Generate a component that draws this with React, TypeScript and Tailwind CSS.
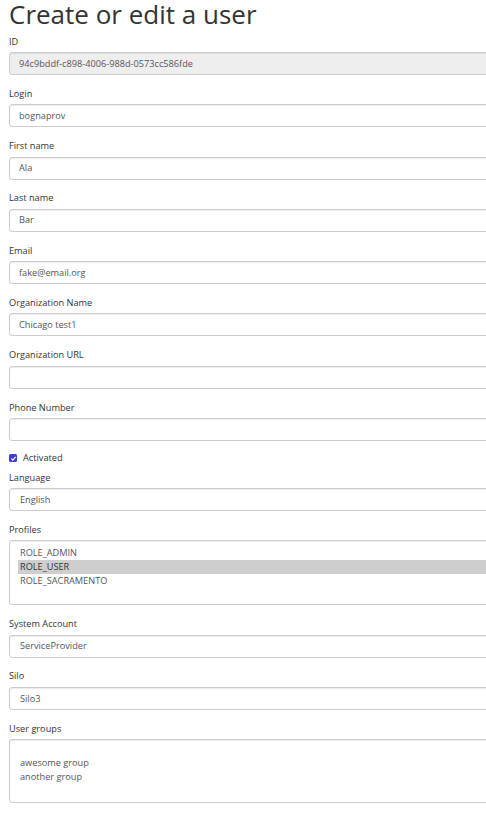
import React from "react";

const textFields = [
  { label: "ID", value: "94c9bddf-c898-4006-988d-0573cc586fde", readOnly: true },
  { label: "Login", value: "bognaprov" },
  { label: "First name", value: "Ala" },
  { label: "Last name", value: "Bar" },
  { label: "Email", value: "fake@email.org" },
  { label: "Organization Name", value: "Chicago test1" },
  { label: "Organization URL", value: "" },
  { label: "Phone Number", value: "" },
];

const boxBase =
  "w-[540px] border border-[#cccccc] rounded-[3px] shadow-[inset_0_1px_1px_rgba(0,0,0,0.075)] text-[9.2px] text-[#555555]";

function Label({ children }: { children: React.ReactNode }) {
  return <div className="text-[9.2px] leading-[13px] mb-[4.5px] text-[#333333]">{children}</div>;
}

function TextField({ label, value, readOnly }: { label: string; value: string; readOnly?: boolean }) {
  return (
    <div className="mb-[11.8px] last:mb-[10.5px]">
      <Label>{label}</Label>
      <div
        className={`${boxBase} h-[23px] flex items-center pl-[9px] ${readOnly ? "bg-[#eeeeee]" : "bg-white"}`}
      >
        {value}
      </div>
    </div>
  );
}

function SelectField({ label, value }: { label: string; value: string }) {
  return (
    <div className="mb-[11.8px]">
      <Label>{label}</Label>
      <div className={`${boxBase} h-[23px] flex items-center pl-[10px] bg-white`}>{value}</div>
    </div>
  );
}

function ListField({
  label,
  options,
  selected,
  height,
  padTop,
}: {
  label: string;
  options: string[];
  selected?: string;
  height: string;
  padTop: string;
}) {
  return (
    <div className="mb-[11.8px]">
      <Label>{label}</Label>
      <div className={`${boxBase} ${height} ${padTop} pl-[8px] bg-white`}>
        {options.map((o) => (
          <div
            key={o}
            className={`h-[14px] leading-[14px] pl-[2px] ${o === selected ? "bg-[#cecece] text-[#333333]" : ""}`}
          >
            {o}
          </div>
        ))}
      </div>
    </div>
  );
}

export default function App() {
  return (
    <div className="w-[486px] min-h-[814px] overflow-hidden bg-white pl-[9px] font-['Open_Sans',sans-serif] text-[#333333]">
      <h1 className="text-[26px] leading-[28px] mb-[6.5px] text-[#333333]">Create or edit a user</h1>

      <div>
        {textFields.map((f) => (
          <TextField key={f.label} {...f} />
        ))}
      </div>

      {/* Activated checkbox */}
      <div className="flex items-center h-[13px] mb-[6px] text-[9.2px] text-[#333333]">
        <span className="w-[8px] h-[8px] rounded-[1.5px] bg-[#3d3ddb] flex items-center justify-center">
          <svg viewBox="0 0 8 8" className="w-[7px] h-[7px]">
            <path d="M1.6 4.2 L3.2 5.8 L6.4 2.2" fill="none" stroke="white" strokeWidth="1.3" />
          </svg>
        </span>
        <span className="ml-[6px]">Activated</span>
      </div>

      <SelectField label="Language" value="English" />

      <ListField
        label="Profiles"
        options={["ROLE_ADMIN", "ROLE_USER", "ROLE_SACRAMENTO"]}
        selected="ROLE_USER"
        height="h-[65px]"
        padTop="pt-[4.7px]"
      />

      <SelectField label="System Account" value="ServiceProvider" />
      <SelectField label="Silo" value="Silo3" />

      <ListField
        label="User groups"
        options={["awesome group", "another group"]}
        height="h-[64px]"
        padTop="pt-[16px]"
      />
    </div>
  );
}
